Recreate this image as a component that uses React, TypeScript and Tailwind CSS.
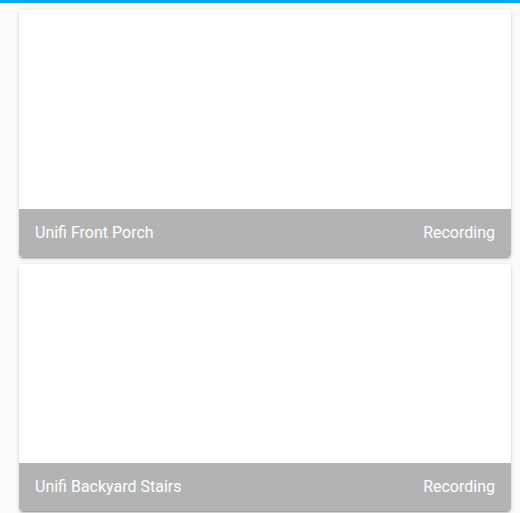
import React from "react";

const cams = ["Unifi Front Porch", "Unifi Backyard Stairs"];

export default function App() {
  return (
    <div className="min-h-[513px] w-[520px] bg-[#fafafa]" style={{ fontFamily: "Roboto, 'Noto Sans', sans-serif" }}>
      <div className="h-[3px] bg-[#03a9f4]" />
      <div className="flex flex-col gap-[7px] pt-[7px] pl-[19px]">
        {cams.map((c) => (
          <div key={c} className="w-[492px] overflow-hidden rounded bg-white shadow-[0_2px_2px_0_rgba(0,0,0,0.14),0_1px_5px_0_rgba(0,0,0,0.12),0_3px_1px_-2px_rgba(0,0,0,0.2)]">
            <div className="h-[199px] bg-white" />
            <div className="flex h-12 items-center justify-between bg-[#b3b3b3] px-4 text-base text-white">
              <span>{c}</span>
              <span>Recording</span>
            </div>
          </div>
        ))}
      </div>
    </div>
  );
}
